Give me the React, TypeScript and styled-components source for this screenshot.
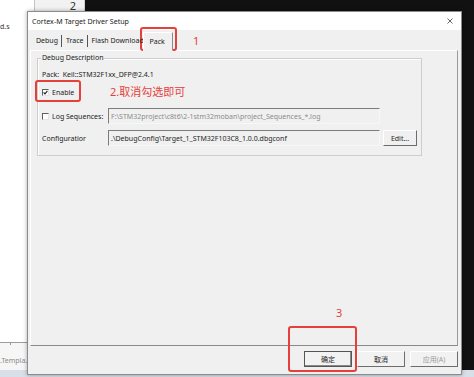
import styled, { createGlobalStyle } from 'styled-components'

const UI_FONT = `'Noto Sans', 'Noto Sans CJK SC', sans-serif`
const RED = '#e5403c'

const GlobalStyle = createGlobalStyle`
  html, body {
    margin: 0;
    padding: 0;
    background: #111;
  }
  body {
    width: 474px;
    height: 377px;
    overflow: hidden;
  }
`

const Screen = styled.div`
  position: relative;
  width: 474px;
  height: 377px;
  overflow: hidden;
  display: grid;
  grid-template-columns: 35px 50px 1fr;
  grid-template-rows: 1fr 7px;
  background: #111;
  font-family: ${UI_FONT};
  color: #222;
`

/* ---------- IDE behind the dialog ---------- */

const ProjectPane = styled.div`
  grid-row: 1;
  grid-column: 1;
  display: flex;
  flex-direction: column;
  background: #fff;
  border-right: 1px solid #c4c4c4;
  font-size: 7px;
`

const FileItem = styled.div`
  padding-top: 22px;
  line-height: 9px;
  color: #333;
  white-space: nowrap;
`

const PaneSpacer = styled.div`
  flex: 1;
`

const PaneTabs = styled.div`
  height: 27px;
  display: flex;
  flex-direction: column;
  border-top: 1px solid #9c9c9c;
  background: #f6f6f6;
`

const PaneTick = styled.div`
  height: 2px;
  margin-left: 10px;
  width: 1px;
  background: #9c9c9c;
`

const PaneTabLabel = styled.div`
  padding-top: 11px;
  line-height: 9px;
  color: #8a8a8a;
  white-space: nowrap;
  overflow: hidden;
`

const Gutter = styled.div`
  grid-row: 1;
  grid-column: 2;
  background: #f2f2f2;
  border-right: 1px solid #cfcfcf;
  text-align: right;
  padding-right: 8px;
  font-size: 11px;
  line-height: 12px;
  color: #333;
  overflow: hidden;
`

const LineNo = styled.div`
  margin-top: 0;
`

const CodeArea = styled.div`
  grid-row: 1;
  grid-column: 3;
  background: #111;
`

const StatusStrip = styled.div`
  grid-row: 2;
  grid-column: 1 / -1;
  background: #d8dfe8;
`

/* ---------- dialog ---------- */

const Dialog = styled.div`
  position: absolute;
  left: 27px;
  top: 11px;
  width: 435px;
  height: 364px;
  box-sizing: border-box;
  display: flex;
  flex-direction: column;
  background: #f0f0f0;
  border: 1px solid #8c8c8c;
  box-shadow: 0 0 4px rgba(0, 0, 0, 0.35);
  font-size: 7px;
`

const TitleBar = styled.div`
  height: 18px;
  flex-shrink: 0;
  display: flex;
  align-items: center;
  justify-content: space-between;
  padding: 0 8px 0 4px;
  background: #fff;
`

const Title = styled.span`
  font-size: 7.1px;
  color: #1a1a1a;
`

const TabStrip = styled.div`
  position: relative;
  z-index: 1;
  height: 20px;
  flex-shrink: 0;
  display: flex;
  align-items: flex-end;
  padding-left: 4px;
`

const Tab = styled.div<{ $clip?: number }>`
  height: 12px;
  margin-bottom: 3px;
  padding: 0 3px 0 4px;
  line-height: 12px;
  white-space: nowrap;
  border-right: ${(p) => (p.$clip ? 'none' : '1px solid #555')};
  ${(p) => (p.$clip ? `width: ${p.$clip}px; overflow: hidden;` : '')}
`

const ActiveTab = styled.div`
  position: relative;
  height: 19px;
  margin: 0 0 -1px -3px;
  padding: 0 7px 0 6px;
  line-height: 18px;
  box-sizing: border-box;
  background: #f0f0f0;
  border: 1px solid;
  border-color: #fff #8a8a8a transparent #fff;
`

const Panel = styled.div`
  flex: 1;
  margin: 0 3px 0 2px;
  padding: 7px 0 0 6px;
  border: 1px solid;
  border-color: #fff #9a9a9a #8a8a8a #fff;
`

const Group = styled.div`
  position: relative;
  width: 385px;
  height: 98px;
  box-sizing: border-box;
  border: 1px solid #cdcdcd;
  box-shadow: inset 1px 1px 0 #fff;
  padding: 8px 0 0 4px;
  display: flex;
  flex-direction: column;
`

const Legend = styled.span`
  position: absolute;
  top: -6px;
  left: 3px;
  padding: 0 1px;
  line-height: 10px;
  background: #f0f0f0;
`

const Row = styled.div<{ $h: number; $mt?: number }>`
  height: ${(p) => p.$h}px;
  margin-top: ${(p) => p.$mt ?? 0}px;
  display: flex;
  align-items: center;
  white-space: pre;
`

const FieldLabel = styled.label`
  width: 66px;
  flex-shrink: 0;
  display: flex;
  align-items: center;
  gap: 3px;
`

const CheckBox = styled.span`
  width: 7px;
  height: 7px;
  box-sizing: border-box;
  display: inline-flex;
  align-items: center;
  justify-content: center;
  background: #fff;
  border: 1px solid;
  border-color: #5f5f5f #e6e6e6 #e6e6e6 #5f5f5f;
`

const TextField = styled.div<{ $disabled?: boolean }>`
  width: 272px;
  height: 16px;
  box-sizing: border-box;
  padding-left: 2px;
  display: flex;
  align-items: center;
  overflow: hidden;
  white-space: nowrap;
  color: ${(p) => (p.$disabled ? '#8c8c8c' : '#1f1f1f')};
  background: #f0f0f0;
  border: 1px solid;
  border-color: #7c7c7c #f7f7f7 #f7f7f7 #7c7c7c;
`

const SmallButton = styled.button`
  margin-left: 3px;
  width: 34px;
  height: 16px;
  padding: 0;
  font: inherit;
  color: #1f1f1f;
  background: #f0f0f0;
  border: 1px solid;
  border-color: #fff #6d6d6d #6d6d6d #fff;
`

const ButtonRow = styled.div`
  height: 28px;
  flex-shrink: 0;
  display: flex;
  justify-content: flex-end;
  align-items: flex-start;
  gap: 5px;
  padding: 5px 3px 0 0;
  box-sizing: border-box;
`

const DialogButton = styled.button<{ $default?: boolean }>`
  width: 48px;
  height: 16px;
  padding: 0;
  font-family: ${UI_FONT};
  font-size: 7px;
  color: ${(p) => (p.disabled ? '#9c9c9c' : '#1f1f1f')};
  background: #f2f2f2;
  border: 1px solid;
  border-color: ${(p) =>
    p.$default ? '#555 #555 #555 #555' : '#fff #6d6d6d #6d6d6d #fff'};
  box-shadow: ${(p) => (p.$default ? 'inset -1px -1px 0 #8a8a8a' : 'none')};
`

/* ---------- red annotations ---------- */

const Mark = styled.div<{ $x: number; $y: number; $w: number; $h: number }>`
  position: absolute;
  left: ${(p) => p.$x}px;
  top: ${(p) => p.$y}px;
  width: ${(p) => p.$w}px;
  height: ${(p) => p.$h}px;
  box-sizing: border-box;
  border: 2px solid ${RED};
  border-radius: 3px;
`

const Note = styled.span<{ $x: number; $y: number }>`
  position: absolute;
  left: ${(p) => p.$x}px;
  top: ${(p) => p.$y}px;
  font-family: ${UI_FONT};
  font-size: 11px;
  line-height: 13px;
  color: ${RED};
  white-space: nowrap;
`

const CloseIcon = () => (
  <svg width="6" height="6" viewBox="0 0 6 6">
    <path d="M0.5 0.5L5.5 5.5M5.5 0.5L0.5 5.5" stroke="#555" strokeWidth="0.9" />
  </svg>
)

const CheckMark = () => (
  <svg width="5" height="5" viewBox="0 0 5 5">
    <path d="M0.6 2.4L2 3.9L4.4 0.9" fill="none" stroke="#222" strokeWidth="1.1" />
  </svg>
)

export default function App() {
  return (
    <>
      <GlobalStyle />
      <Screen>
        <ProjectPane>
          <FileItem>d.s</FileItem>
          <PaneSpacer />
          <PaneTabs>
            <PaneTick />
            <PaneTabLabel>.Templa...</PaneTabLabel>
          </PaneTabs>
        </ProjectPane>
        <Gutter>
          <LineNo>2</LineNo>
        </Gutter>
        <CodeArea />
        <StatusStrip />

        <Dialog>
          <TitleBar>
            <Title>Cortex-M Target Driver Setup</Title>
            <CloseIcon />
          </TitleBar>
          <TabStrip>
            <Tab>Debug</Tab>
            <Tab>Trace</Tab>
            <Tab $clip={51}>Flash Download</Tab>
            <ActiveTab>Pack</ActiveTab>
          </TabStrip>
          <Panel>
            <Group>
              <Legend>Debug Description</Legend>
              <Row $h={14}>Pack:  Keil::STM32F1xx_DFP@2.4.1</Row>
              <Row $h={14} $mt={4}>
                <FieldLabel>
                  <CheckBox>
                    <CheckMark />
                  </CheckBox>
                  Enable
                </FieldLabel>
              </Row>
              <Row $h={16} $mt={9}>
                <FieldLabel>
                  <CheckBox />
                  Log Sequences:
                </FieldLabel>
                <TextField $disabled>
                  F:\STM32project\c8t6\2-1stm32moban\project_Sequences_*.log
                </TextField>
              </Row>
              <Row $h={16} $mt={6}>
                <FieldLabel>Configuratior</FieldLabel>
                <TextField>.\DebugConfig\Target_1_STM32F103C8_1.0.0.dbgconf</TextField>
                <SmallButton>Edit...</SmallButton>
              </Row>
            </Group>
          </Panel>
          <ButtonRow>
            <DialogButton $default>确定</DialogButton>
            <DialogButton>取消</DialogButton>
            <DialogButton disabled>应用(A)</DialogButton>
          </ButtonRow>
        </Dialog>

        <Mark $x={140} $y={27} $w={37} $h={24} />
        <Note $x={193} $y={34}>1</Note>
        <Mark $x={35} $y={80} $w={46} $h={22} />
        <Note $x={110} $y={85}>2.取消勾选即可</Note>
        <Note $x={336} $y={306}>3</Note>
        <Mark $x={288} $y={326} $w={69} $h={46} />
      </Screen>
    </>
  )
}
